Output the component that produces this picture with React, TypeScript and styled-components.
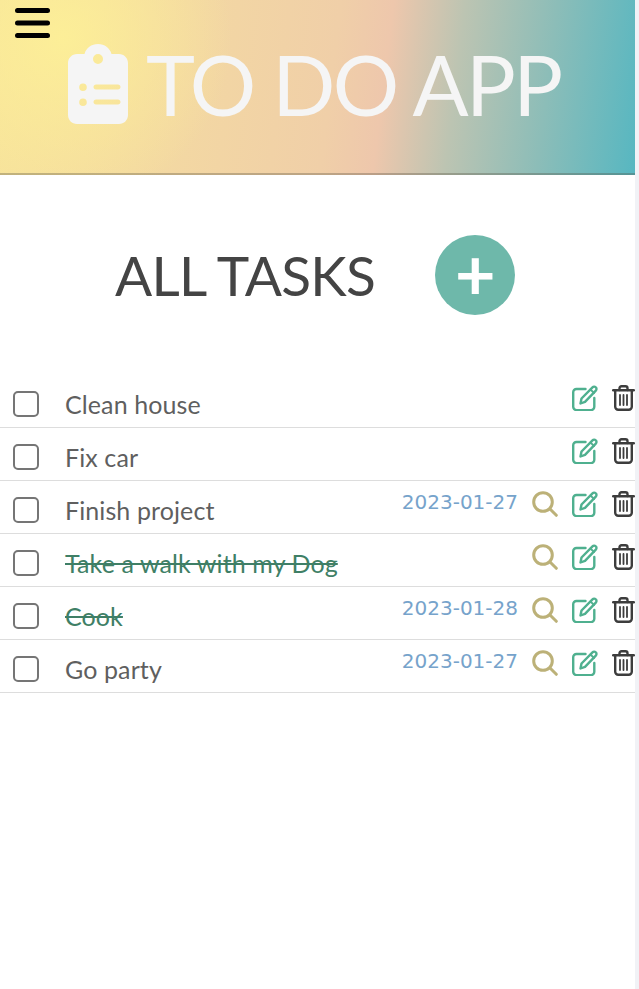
import React from "react";
import styled, { createGlobalStyle } from "styled-components";

const tasks = [
    { id: 1, name: "Clean house", done: false },
    { id: 2, name: "Fix car", done: false },
    { id: 3, name: "Finish project", done: false, date: "2023-01-27", search: true },
    { id: 4, name: "Take a walk with my Dog", done: true, search: true },
    { id: 5, name: "Cook", done: true, date: "2023-01-28", search: true },
    { id: 6, name: "Go party", done: false, date: "2023-01-27", search: true },
];

const MenuIcon = () => (
    <svg width="35" height="30" viewBox="0 0 35 30" fill="#000">
        <rect x="0" y="0" width="35" height="5" rx="2.5" />
        <rect x="0" y="12.5" width="35" height="5" rx="2.5" />
        <rect x="0" y="25" width="35" height="5" rx="2.5" />
    </svg>
);

const ClipboardIcon = () => (
    <svg width="60" height="80" viewBox="0 0 60 80">
        <path
            fill="#f5f5f5"
            fillRule="evenodd"
            d="M16.5 10C18 4 23.500 0 30 0s12 4 13.500 10H51c5 0 9 4 9 9v52c0 5-4 9-9 9H9c-5 0-9-4-9-9V19c0-5 4-9 9-9h7.500ZM30 10a5 5 0 1 0 0 10 5 5 0 0 0 0-10ZM15 39.500a3.800 3.800 0 1 0 0 7.600 3.800 3.800 0 0 0 0-7.600ZM15 54.500a3.800 3.800 0 1 0 0 7.600 3.800 3.800 0 0 0 0-7.600ZM28 40.500c-1.400 0-2.500 1.100-2.500 2.500s1.100 2.500 2.500 2.500h22c1.400 0 2.500-1.100 2.500-2.500s-1.100-2.500-2.500-2.500H28ZM28 55.500c-1.400 0-2.500 1.100-2.500 2.500s1.100 2.500 2.500 2.500h22c1.400 0 2.500-1.100 2.500-2.500s-1.100-2.500-2.500-2.500H28Z"
        />
    </svg>
);

const SearchIcon = () => (
    <svg width="26" height="26" viewBox="0 0 26 26" fill="none" stroke="#bcb178" strokeWidth="3" strokeLinecap="round">
        <circle cx="11" cy="11" r="9.300" />
        <path d="M18 18l6.300 6.300" />
    </svg>
);

const EditIcon = () => (
    <svg width="26" height="26" viewBox="0 0 26 26" fill="none" stroke="#4fb08f" strokeWidth="2.400" strokeLinecap="round" strokeLinejoin="round">
        <path d="M13.500 4H4.500a3.300 3.300 0 0 0-3.300 3.300v14.500a3.300 3.300 0 0 0 3.300 3.300h14.500a3.300 3.300 0 0 0 3.300-3.300v-8.800" />
        <path d="M8.500 18.500l1-5L20.500 2.300a2.200 2.200 0 0 1 3.200 0l0.100 0.100a2.200 2.200 0 0 1 0 3.200L13 16.800l-4.500 1.700Z" />
        <path d="M18.500 4.500l3.500 3.500" strokeWidth="1.800" />
    </svg>
);

const TrashIcon = () => (
    <svg width="23" height="26" viewBox="0.5 0 23 26" fill="none" stroke="#3d3d3d" strokeWidth="2.400" strokeLinecap="round" strokeLinejoin="round">
        <path d="M1.700 5.200h20.600" />
        <path d="M8 5V3.200a2 2 0 0 1 2-2h4a2 2 0 0 1 2 2V5" />
        <path d="M3.700 5.200v16.500a3 3 0 0 0 3 3h10.600a3 3 0 0 0 3-3V5.200" />
        <path d="M8.500 10v10M12 10v10M15.500 10v10" strokeWidth="1.800" />
    </svg>
);

const GlobalStyle = createGlobalStyle`
    html, body {
        margin: 0;
        padding: 0;
        background: #ffffff;
    }
    * {
        box-sizing: border-box;
    }
`;

const App = () => {
    return (
        <>
            <GlobalStyle />
            <Screen>
                <Page>
                    <Header>
                        <MenuButton>
                            <MenuIcon />
                        </MenuButton>
                        <Brand>
                            <ClipboardIcon />
                            <BrandTitle>TO DO APP</BrandTitle>
                        </Brand>
                    </Header>
                    <TitleRow>
                        <Title>ALL TASKS</Title>
                        <AddButton>+</AddButton>
                    </TitleRow>
                    <TaskList>
                        {tasks.map((task) => (
                            <TaskRow key={task.id}>
                                <Check type="checkbox" />
                                <TaskName done={task.done}>{task.name}</TaskName>
                                <Actions>
                                    {task.date && <DueDate>{task.date}</DueDate>}
                                    {task.search && (
                                        <ActionSlot>
                                            <SearchIcon />
                                        </ActionSlot>
                                    )}
                                    <ActionSlot>
                                        <EditIcon />
                                    </ActionSlot>
                                    <ActionSlot>
                                        <TrashIcon />
                                    </ActionSlot>
                                </Actions>
                            </TaskRow>
                        ))}
                    </TaskList>
                </Page>
                <ScrollTrack />
            </Screen>
        </>
    );
};

const Screen = styled.div`
    display: flex;
    width: 639px;
    height: 989px;
    overflow: hidden;
`;

const Page = styled.div`
    width: 635px;
    display: flex;
    flex-direction: column;
    font-family: "Lato", "Liberation Sans", sans-serif;
`;

const ScrollTrack = styled.div`
    width: 4px;
    background: #f1f2f6;
`;

const Header = styled.header`
    height: 175px;
    padding: 8px 0 0 15px;
    background-origin: border-box;
    background-image:
        radial-gradient(circle at 62px 38px, rgba(253, 240, 151, 0.9) 0%, rgba(253, 240, 151, 0) 170px),
        linear-gradient(97deg, #f7e39b 0%, #f0cfa8 52%, #eec7ac 60%, #bcc4b2 71%, #8cbdb8 85%, #57b7c1 100%);
    border-bottom: 2px solid rgba(80, 75, 60, 0.32);
`;

const MenuButton = styled.div`
    height: 30px;
    line-height: 0;
`;

const Brand = styled.div`
    display: flex;
    align-items: center;
    gap: 18px;
    padding: 6px 0 0 53px;
`;

const BrandTitle = styled.h1`
    margin: 0;
    font-weight: 400;
    font-size: 83px;
    line-height: 80px;
    letter-spacing: -2.6px;
    white-space: nowrap;
    color: #f5f5f5;
`;

const TitleRow = styled.div`
    height: 200px;
    display: flex;
    align-items: center;
    padding: 0 0 0 115px;
    gap: 60px;
`;

const Title = styled.h2`
    margin: 0;
    font-weight: 400;
    font-size: 55px;
    letter-spacing: -0.7px;
    white-space: nowrap;
    color: #444444;
`;

const AddButton = styled.div`
    width: 80px;
    height: 80px;
    padding-bottom: 4px;
    border-radius: 50%;
    background: #6eb8aa;
    color: #ffffff;
    font-size: 70px;
    font-weight: 700;
    display: flex;
    align-items: center;
    justify-content: center;
`;

const TaskList = styled.div`
    display: flex;
    flex-direction: column;
`;

const TaskRow = styled.div`
    height: 53px;
    display: flex;
    align-items: center;
    padding-left: 13px;
    border-bottom: 1px solid #dddddd;
`;

const Check = styled.input`
    appearance: none;
    width: 26px;
    height: 26px;
    margin: 6px 26px 0 0;
    border: 2px solid #757575;
    border-radius: 5px;
    background: #ffffff;
`;

const TaskName = styled.span<{ done?: boolean }>`
    font-size: 25px;
    letter-spacing: 0.1px;
    color: ${(props) => (props.done ? "#3f7f66" : "#5f5f5f")};
    text-decoration: ${(props) => (props.done ? "line-through" : "none")};
    position: relative;
    top: 3px;
`;

const Actions = styled.div`
    margin-left: auto;
    display: flex;
    align-items: center;
    gap: 14px;
    padding-bottom: 6px;
`;

const DueDate = styled.span`
    font-family: "DejaVu Sans", sans-serif;
    font-size: 20px;
    padding-bottom: 4px;
    color: #76a3cb;
`;

const ActionSlot = styled.div`
    line-height: 0;
`;

export default App;
